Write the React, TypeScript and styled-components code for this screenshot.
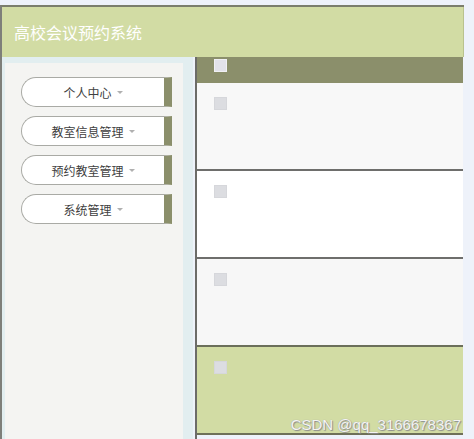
import React from "react";
import styled, { createGlobalStyle } from "styled-components";

const Global = createGlobalStyle`
  html, body { margin: 0; padding: 0; }
  body {
    background: #eef2fa;
    font-family: "Noto Sans CJK SC", "Noto Sans", sans-serif;
    overflow: hidden;
  }
`;

const Page = styled.div`
  position: relative;
  width: 474px;
  height: 439px;
  overflow: hidden;
  padding-top: 5px;
  box-sizing: border-box;
`;

const Frame = styled.div`
  width: 464px;
  border-top: 2px solid #7b7e6c;
  border-left: 2px solid #7e7f7a;
  box-sizing: border-box;
`;

const Header = styled.header`
  height: 50px;
  background: #d2dca4;
  border-right: 1px solid #b9c28e;
  display: flex;
  align-items: center;
  padding-left: 12px;
  color: #ffffff;
  font-size: 16px;
`;

const Body = styled.div`
  display: flex;
  gap: 2px;
  height: 400px;
`;

const Sidebar = styled.aside`
  width: 191px;
  flex-shrink: 0;
  background: #e2eef0;
  padding: 6px 10px 0 3px;
  box-sizing: border-box;
  display: flex;
`;

const SideInner = styled.nav`
  flex: 1;
  background: #f4f4f2;
  padding: 14px 0 0 16px;
  display: flex;
  flex-direction: column;
  gap: 9px;
`;

const MenuButton = styled.div`
  width: 151px;
  height: 30px;
  box-sizing: border-box;
  background: #ffffff;
  border: 1px solid #a9aaa5;
  border-right: 8px solid #8b8f6b;
  border-radius: 15px 0 0 15px;
  display: flex;
  align-items: center;
  justify-content: center;
  gap: 5px;
  font-size: 12px;
  color: #404040;
`;

const Caret = styled.span`
  width: 0;
  height: 0;
  border-left: 3px solid transparent;
  border-right: 3px solid transparent;
  border-top: 3px solid #b0b0b0;
  margin-top: 1px;
`;

const Main = styled.main`
  width: 268px;
  border-left: 2px solid #6c6c68;
  box-sizing: border-box;
  display: flex;
  flex-direction: column;
`;

const TableHead = styled.div`
  height: 26px;
  background: #8b8f6b;
  padding: 2px 0 0 17px;
  box-sizing: border-box;
`;

const Row = styled.div<{ $bg: string; $line: string }>`
  height: 88px;
  flex-shrink: 0;
  background: ${(p) => p.$bg};
  border-bottom: 2px solid ${(p) => p.$line};
  padding: 14px 0 0 17px;
  box-sizing: border-box;
`;

const Check = styled.div<{ $head?: boolean }>`
  width: 13px;
  height: 13px;
  box-sizing: border-box;
  background: ${(p) => (p.$head ? "#e2e2ea" : "#dcdde1")};
  border: 1px solid ${(p) => (p.$head ? "#f0f0f4" : "#d6d7db")};
`;

const Watermark = styled.div`
  position: absolute;
  right: 13px;
  bottom: 6px;
  font-family: "Liberation Sans", Arial, sans-serif;
  font-size: 15px;
  color: #f4f4f4;
  text-shadow: 1px 1px 1px #8a8a8a, 0 0 1px #9a9a9a;
`;

const menus = ["个人中心", "教室信息管理", "预约教室管理", "系统管理"];
const rows = [
  { bg: "#f8f8f8", line: "#6e6e6c" },
  { bg: "#ffffff", line: "#6e6e6c" },
  { bg: "#f7f7f7", line: "#6b6f5a" },
  { bg: "#d2dca4", line: "#6e7058" },
];

export default function App() {
  return (
    <Page>
      <Global />
      <Frame>
        <Header>高校会议预约系统</Header>
        <Body>
          <Sidebar>
            <SideInner>
              {menus.map((m) => (
                <MenuButton key={m}>
                  {m}
                  <Caret />
                </MenuButton>
              ))}
            </SideInner>
          </Sidebar>
          <Main>
            <TableHead>
              <Check $head />
            </TableHead>
            {rows.map((r, i) => (
              <Row key={i} $bg={r.bg} $line={r.line}>
                <Check />
              </Row>
            ))}
          </Main>
        </Body>
      </Frame>
      <Watermark>CSDN @qq_3166678367</Watermark>
    </Page>
  );
}
